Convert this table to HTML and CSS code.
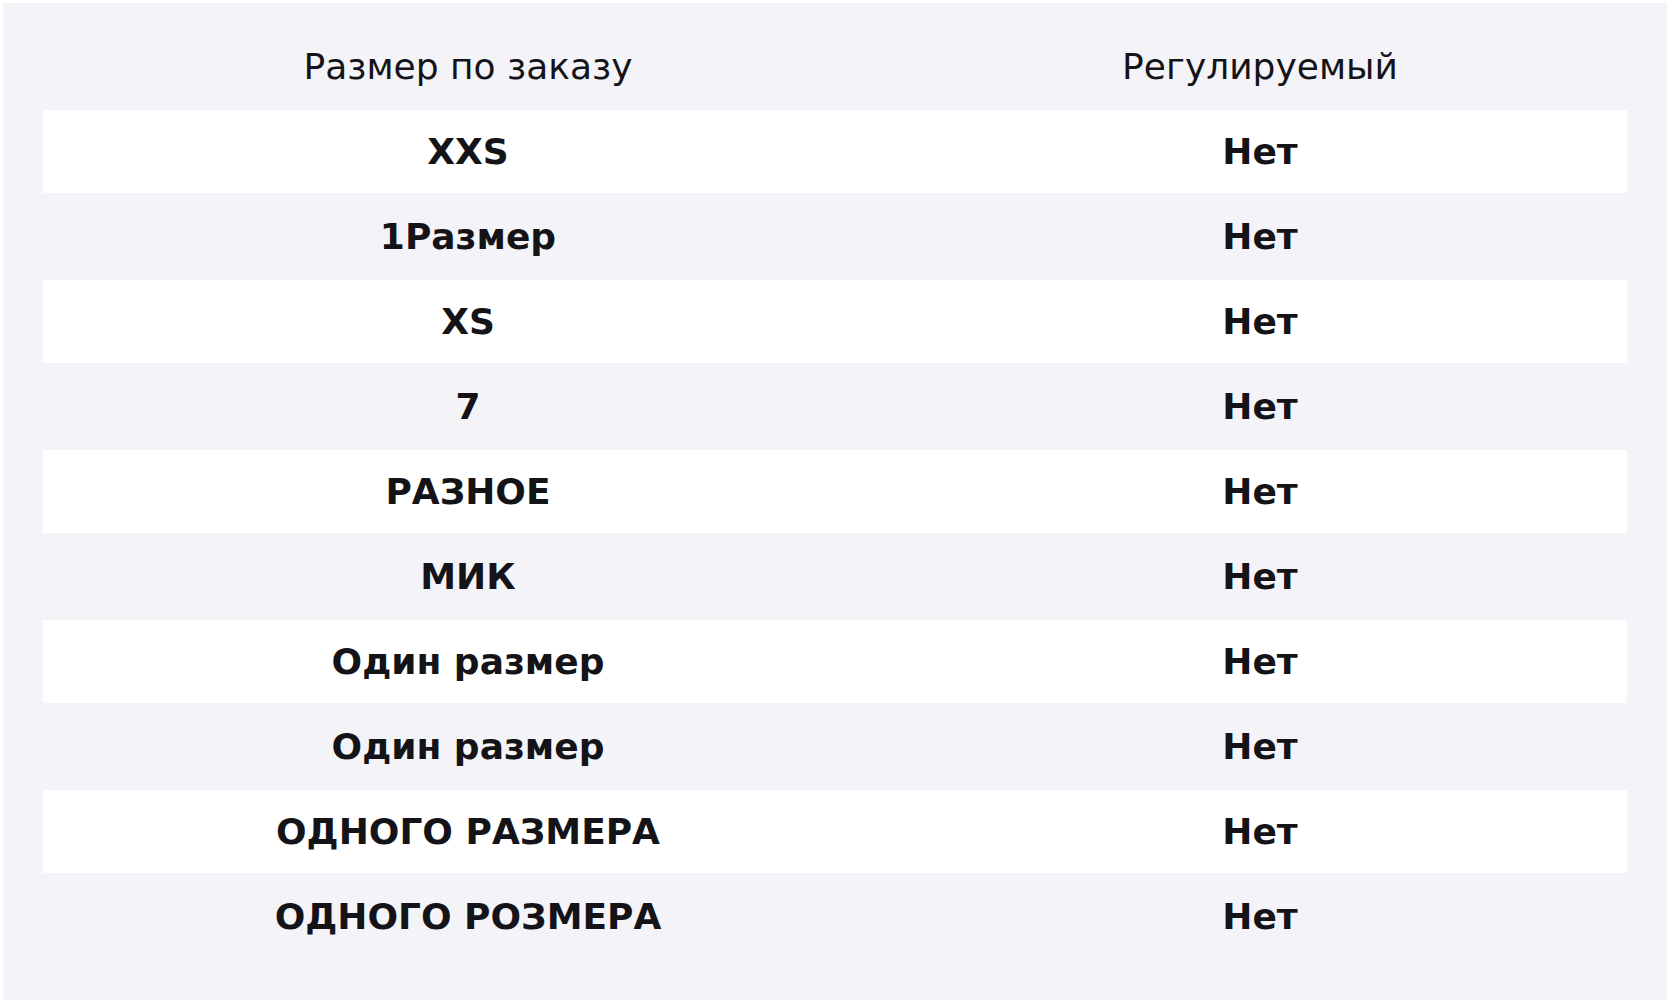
FILE: index.html
```html
<!DOCTYPE html>
<html lang="ru">
<head>
<meta charset="utf-8">
<title>Размеры</title>
<link rel="stylesheet" href="styles.css">
</head>
<body>
<div class="panel">
  <div class="table">
    <div class="row head">
      <div class="cell">Размер по заказу</div>
      <div class="cell">Регулируемый</div>
    </div>
    <div class="row alt"><div class="cell">XXS</div><div class="cell">Нет</div></div>
    <div class="row"><div class="cell">1Размер</div><div class="cell">Нет</div></div>
    <div class="row alt"><div class="cell">XS</div><div class="cell">Нет</div></div>
    <div class="row"><div class="cell">7</div><div class="cell">Нет</div></div>
    <div class="row alt"><div class="cell">РАЗНОЕ</div><div class="cell">Нет</div></div>
    <div class="row"><div class="cell">МИК</div><div class="cell">Нет</div></div>
    <div class="row alt"><div class="cell">Один размер</div><div class="cell">Нет</div></div>
    <div class="row"><div class="cell">Один размер</div><div class="cell">Нет</div></div>
    <div class="row alt"><div class="cell">ОДНОГО РАЗМЕРА</div><div class="cell">Нет</div></div>
    <div class="row"><div class="cell">ОДНОГО РОЗМЕРА</div><div class="cell">Нет</div></div>
  </div>
</div>
</body>
</html>
```
FILE: styles.css
```css
html, body {
  margin: 0;
  padding: 0;
  background: #ffffff;
}
body {
  padding: 3px;
  font-family: "DejaVu Sans", sans-serif;
  color: #141418;
}
.panel {
  box-sizing: border-box;
  width: 1664px;
  height: 997px;
  background: #f4f4f8;
  padding: 22px 40px 40px;
}
.table {
  display: flex;
  flex-direction: column;
  gap: 2px;
}
.row {
  display: grid;
  grid-template-columns: 850px 1fr;
  height: 83px;
  align-items: center;
}
.row.alt {
  background: #ffffff;
}
.cell {
  text-align: center;
  font-size: 36px;
  font-weight: 700;
}
.head .cell {
  font-weight: 400;
}
```
